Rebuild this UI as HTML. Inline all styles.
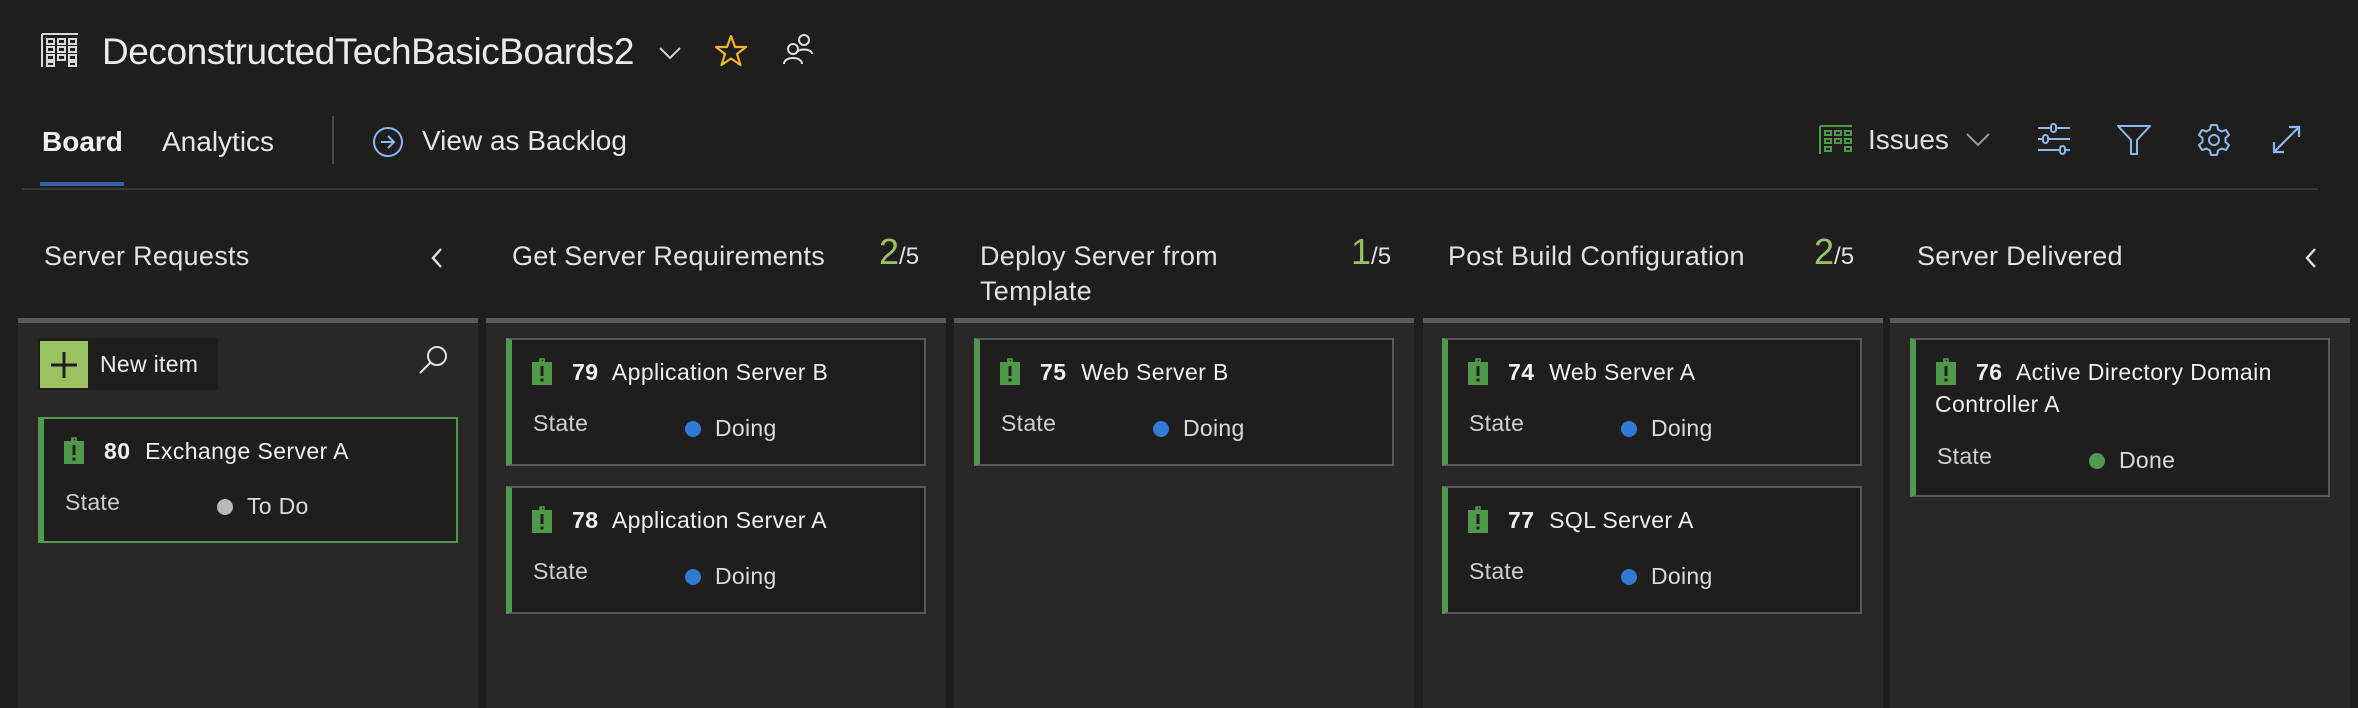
<!DOCTYPE html>
<html><head><meta charset="utf-8"><style>
*{margin:0;padding:0;box-sizing:border-box}
body{width:2358px;height:708px;background:#1f1e1d;font-family:"Liberation Sans",sans-serif;color:#e4e4e4;position:relative;overflow:hidden}
.a{position:absolute;white-space:nowrap}
.col{position:absolute;top:318px;width:460px;height:390px;background:#292827;border-top:5px solid #5c5b5a}
.ch{position:absolute;font-size:27px;color:#e2e2e2;line-height:36px;letter-spacing:0.3px}
.cnt{position:absolute;font-size:24px;color:#e2e2e2;line-height:36px}
.cnt b{font-weight:normal;color:#9bc262;font-size:36px}
.card{position:absolute;background:#1f1e1d;border:2px solid #5a5958;border-left:6px solid #519950;width:420px}
.card .ic{position:absolute;left:20px;top:18px}
.card .t{position:absolute;left:60px;top:17px;font-size:23px;color:#efefef;line-height:30px;white-space:nowrap;letter-spacing:0.4px}
.card .t b{margin-right:8px}
.card .s{position:absolute;left:21px;font-size:23px;color:#cfcfcf;letter-spacing:0.3px}
.card .d{position:absolute;left:173px;font-size:23px;color:#dcdcdc;letter-spacing:0.3px}
.card .d i{display:inline-block;width:16px;height:16px;border-radius:50%;margin-right:14px;vertical-align:-1px}
</style></head><body>

<svg class="a" style="left:40px;top:32px" width="40" height="36" viewBox="0 0 40 36" fill="none" stroke="#d8d8d8" stroke-width="2">
<path d="M2 2H38M2 2V35"/>
<rect x="7" y="7" width="7" height="5"/><rect x="18" y="7" width="7" height="5"/><rect x="29" y="7" width="7" height="5"/>
<rect x="7" y="15" width="7" height="5"/><rect x="18" y="15" width="7" height="5"/><rect x="29" y="15" width="7" height="5"/>
<rect x="7" y="23" width="7" height="5"/><rect x="18" y="23" width="7" height="5"/><rect x="29" y="23" width="7" height="5"/>
<rect x="7" y="30" width="7" height="4"/><rect x="29" y="30" width="7" height="4"/>
</svg>
<div class="a" style="left:102px;top:29px;font-size:37px;color:#ececec;line-height:46px;letter-spacing:-0.45px">DeconstructedTechBasicBoards2</div>
<svg class="a" style="left:658px;top:45px" width="24" height="16"><path d="M2 3L12 13L22 3" stroke="#d0d0d0" stroke-width="2" fill="none"/></svg>
<svg class="a" style="left:714px;top:34px" width="34" height="34" viewBox="0 0 34 34"><path d="M17 2L21 13H32L23 20L26.5 31L17 24.5L7.5 31L11 20L2 13H13Z" fill="none" stroke="#f2b22b" stroke-width="2.2" stroke-linejoin="round"/></svg>
<svg class="a" style="left:782px;top:32px" width="32" height="34" viewBox="0 0 32 34" fill="none" stroke="#e0e0e0" stroke-width="2"><circle cx="22" cy="8" r="5"/><path d="M14 22C14 16 30 16 30 22"/><circle cx="11" cy="17" r="5"/><path d="M2 32C2 24 20 24 20 32"/></svg>

<div class="a" style="left:42px;top:124px;font-size:28px;font-weight:bold;color:#f0f0f0;line-height:36px">Board</div>
<div class="a" style="left:40px;top:182px;width:84px;height:4px;background:#2f65a8"></div>
<div class="a" style="left:162px;top:124px;font-size:28px;color:#e6e6e6;line-height:36px">Analytics</div>
<div class="a" style="left:332px;top:116px;width:2px;height:48px;background:#4a4948"></div>
<svg class="a" style="left:372px;top:126px" width="32" height="32" viewBox="0 0 32 32" fill="none" stroke="#8cb8f0" stroke-width="2"><circle cx="16" cy="16" r="14"/><path d="M9 16H22M16 10L22 16L16 22"/></svg>
<div class="a" style="left:422px;top:123px;font-size:28px;color:#e6e6e6;line-height:36px">View as Backlog</div>
<div class="a" style="left:22px;top:188px;width:2296px;height:2px;background:#3a3938"></div>

<svg class="a" style="left:1819px;top:125px" width="34" height="30" viewBox="0 0 34 30" fill="none" stroke="#4e9a4a" stroke-width="2"><path d="M1 1H33M1 1V29"/><rect x="6" y="6" width="6" height="4"/><rect x="16" y="6" width="6" height="4"/><rect x="26" y="6" width="6" height="4"/><rect x="6" y="14" width="6" height="4"/><rect x="16" y="14" width="6" height="4"/><rect x="26" y="14" width="6" height="4"/><rect x="6" y="22" width="6" height="4"/><rect x="26" y="22" width="6" height="4"/></svg>
<div class="a" style="left:1868px;top:122px;font-size:28px;color:#e0e0e0;line-height:36px">Issues</div>
<svg class="a" style="left:1965px;top:131px" width="26" height="18"><path d="M2 3L13 14L24 3" stroke="#9a9a9a" stroke-width="2" fill="none"/></svg>
<svg class="a" style="left:2037px;top:123px" width="34" height="32" viewBox="0 0 34 32" fill="none" stroke="#8cb8f0" stroke-width="2"><path d="M1 5H33M1 16H33M1 27H33"/><rect x="14" y="1" width="5" height="8" rx="2.5" fill="#1f1e1d"/><rect x="6" y="12" width="5" height="8" rx="2.5" fill="#1f1e1d"/><rect x="23" y="23" width="5" height="8" rx="2.5" fill="#1f1e1d"/></svg>
<svg class="a" style="left:2117px;top:125px" width="34" height="30" viewBox="0 0 34 30" fill="none" stroke="#8cb8f0" stroke-width="2" stroke-linejoin="round"><path d="M1 1H33L20 15V29H14V15Z"/></svg>
<svg class="a" style="left:2197px;top:123px" width="34" height="34" viewBox="0 0 34 34" fill="none" stroke="#8cb8f0" stroke-width="2"><path d="M14 2H20L21 6.5L24.5 8.5L29 7L32 12L28.5 15V19L32 22L29 27L24.5 25.5L21 27.5L20 32H14L13 27.5L9.5 25.5L5 27L2 22L5.5 19V15L2 12L5 7L9.5 8.5L13 6.5Z" stroke-linejoin="round"/><circle cx="17" cy="17" r="5"/></svg>
<svg class="a" style="left:2271px;top:125px" width="31" height="30" viewBox="0 0 31 30" fill="none" stroke="#8cb8f0" stroke-width="2.2"><path d="M3 27L28 2M18 2H28V12M3 17V27H13"/></svg>

<div class="col" style="left:18px"></div>
<div class="col" style="left:486px"></div>
<div class="col" style="left:954px"></div>
<div class="col" style="left:1423px"></div>
<div class="col" style="left:1890px"></div>

<div class="ch" style="left:44px;top:238px">Server Requests</div>
<svg class="a" style="left:430px;top:247px" width="14" height="22"><path d="M11 2L3 11L11 20" stroke="#e0e0e0" stroke-width="2.4" fill="none"/></svg>
<div class="ch" style="left:512px;top:238px">Get Server Requirements</div>
<div class="cnt" style="left:879px;top:234px"><b>2</b>/5</div>
<div class="ch" style="left:980px;top:238px">Deploy Server from</div>
<div class="ch" style="left:980px;top:273px">Template</div>
<div class="cnt" style="left:1351px;top:234px"><b>1</b>/5</div>
<div class="ch" style="left:1448px;top:238px">Post Build Configuration</div>
<div class="cnt" style="left:1814px;top:234px"><b>2</b>/5</div>
<div class="ch" style="left:1917px;top:238px">Server Delivered</div>
<svg class="a" style="left:2304px;top:247px" width="14" height="22"><path d="M11 2L3 11L11 20" stroke="#e0e0e0" stroke-width="2.4" fill="none"/></svg>

<div class="a" style="left:38px;top:338px;width:180px;height:52px;background:#1f1e1d"></div>
<div class="a" style="left:40px;top:341px;width:48px;height:47px;background:#9bc262"></div>
<svg class="a" style="left:50px;top:351px" width="28" height="28"><path d="M14 1V27M1 14H27" stroke="#1f1e1d" stroke-width="3"/></svg>
<div class="a" style="left:100px;top:349px;font-size:23px;color:#ececec;line-height:30px;letter-spacing:0.3px">New item</div>
<svg class="a" style="left:418px;top:344px" width="32" height="32" viewBox="0 0 32 32" fill="none" stroke="#e0e0e0" stroke-width="2"><circle cx="19" cy="12" r="9"/><path d="M13 18L2 29"/></svg>

<svg width="0" height="0" style="position:absolute"><defs><g id="bug"><path d="M8 1H12V4H8Z M9 1V4" fill="none" stroke="#4e9a4a" stroke-width="1.6"/><rect x="0" y="4" width="20" height="23" fill="#4e9a4a"/><rect x="8.5" y="8" width="3" height="10" fill="#1f1e1d"/><rect x="8.5" y="20.5" width="3" height="3" fill="#1f1e1d"/></g></defs></svg>

<div class="card" style="left:38px;top:417px;height:126px;border-color:#519950">
<svg class="ic" width="20" height="27"><use href="#bug"/></svg>
<div class="t"><b>80</b> Exchange Server A</div>
<div class="s" style="top:70px">State</div><div class="d" style="top:74px"><i style="background:#b8b8b8"></i>To Do</div>
</div>

<div class="card" style="left:506px;top:338px;height:128px">
<svg class="ic" width="20" height="27"><use href="#bug"/></svg>
<div class="t"><b>79</b> Application Server B</div>
<div class="s" style="top:70px">State</div><div class="d" style="top:75px"><i style="background:#2f7bd3"></i>Doing</div>
</div>
<div class="card" style="left:506px;top:486px;height:128px">
<svg class="ic" width="20" height="27"><use href="#bug"/></svg>
<div class="t"><b>78</b> Application Server A</div>
<div class="s" style="top:70px">State</div><div class="d" style="top:75px"><i style="background:#2f7bd3"></i>Doing</div>
</div>

<div class="card" style="left:974px;top:338px;height:128px">
<svg class="ic" width="20" height="27"><use href="#bug"/></svg>
<div class="t"><b>75</b> Web Server B</div>
<div class="s" style="top:70px">State</div><div class="d" style="top:75px"><i style="background:#2f7bd3"></i>Doing</div>
</div>

<div class="card" style="left:1442px;top:338px;height:128px">
<svg class="ic" width="20" height="27"><use href="#bug"/></svg>
<div class="t"><b>74</b> Web Server A</div>
<div class="s" style="top:70px">State</div><div class="d" style="top:75px"><i style="background:#2f7bd3"></i>Doing</div>
</div>
<div class="card" style="left:1442px;top:486px;height:128px">
<svg class="ic" width="20" height="27"><use href="#bug"/></svg>
<div class="t"><b>77</b> SQL Server A</div>
<div class="s" style="top:70px">State</div><div class="d" style="top:75px"><i style="background:#2f7bd3"></i>Doing</div>
</div>

<div class="card" style="left:1910px;top:338px;height:159px">
<svg class="ic" width="20" height="27"><use href="#bug"/></svg>
<div class="t"><b>76</b> Active Directory Domain</div>
<div class="t" style="left:19px;top:49px">Controller A</div>
<div class="s" style="top:103px">State</div><div class="d" style="top:107px"><i style="background:#519950"></i>Done</div>
</div>

</body></html>
